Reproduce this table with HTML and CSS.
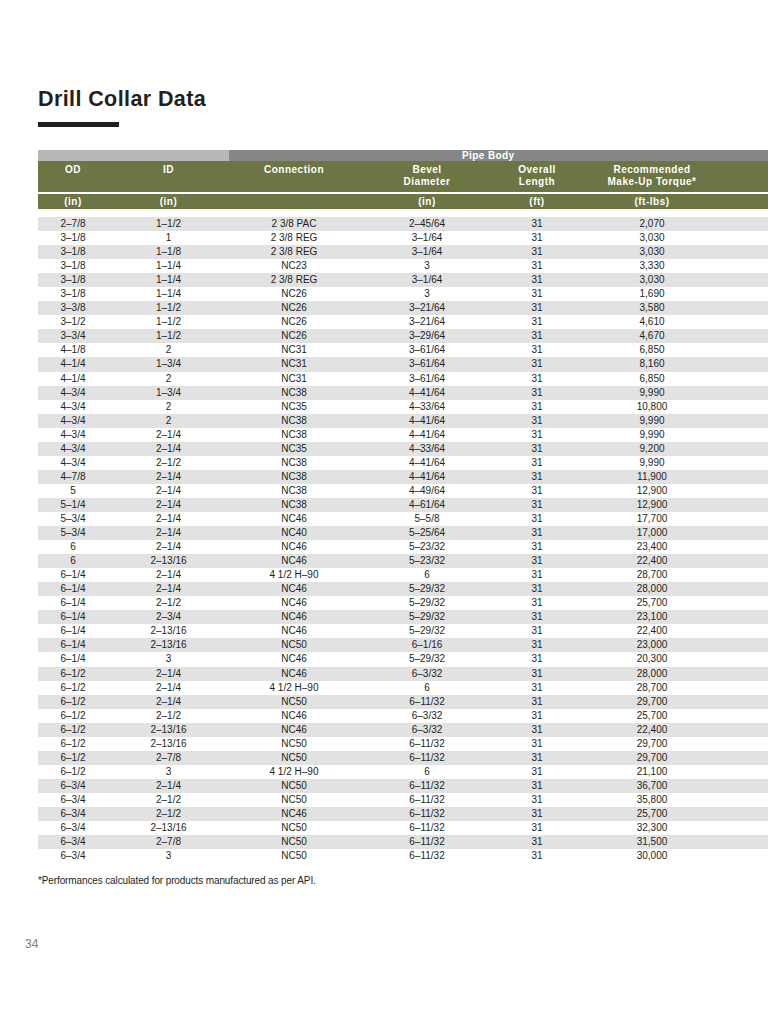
FILE: index.html
```html
<!DOCTYPE html>
<html lang="en">
<head>
<meta charset="utf-8">
<title>Drill Collar Data</title>
<link rel="stylesheet" href="styles.css">
</head>
<body>
<main class="page">
  <h1 class="title">Drill Collar Data</h1>
  <div class="title-rule"></div>

  <table class="data">
    <colgroup>
      <col class="c-od"><col class="c-id"><col class="c-conn"><col class="c-bevel"><col class="c-len"><col class="c-torque"><col class="c-rest">
    </colgroup>
    <thead>
      <tr class="band">
        <th colspan="2" class="band-light"></th>
        <th colspan="5" class="band-dark"><span class="band-label">Pipe Body</span></th>
      </tr>
      <tr class="head">
        <th>OD</th><th>ID</th><th>Connection</th><th>Bevel<br>Diameter</th><th>Overall<br>Length</th><th>Recommended<br>Make-Up Torque*</th><th></th>
      </tr>
      <tr class="units">
        <th>(in)</th><th>(in)</th><th></th><th>(in)</th><th>(ft)</th><th>(ft-lbs)</th><th></th>
      </tr>
      <tr class="gap"><td colspan="7"></td></tr>
    </thead>
    <tbody>
      <tr><td>2–7/8</td><td>1–1/2</td><td>2 3/8 PAC</td><td>2–45/64</td><td>31</td><td>2,070</td><td></td></tr>
      <tr><td>3–1/8</td><td>1</td><td>2 3/8 REG</td><td>3–1/64</td><td>31</td><td>3,030</td><td></td></tr>
      <tr><td>3–1/8</td><td>1–1/8</td><td>2 3/8 REG</td><td>3–1/64</td><td>31</td><td>3,030</td><td></td></tr>
      <tr><td>3–1/8</td><td>1–1/4</td><td>NC23</td><td>3</td><td>31</td><td>3,330</td><td></td></tr>
      <tr><td>3–1/8</td><td>1–1/4</td><td>2 3/8 REG</td><td>3–1/64</td><td>31</td><td>3,030</td><td></td></tr>
      <tr><td>3–1/8</td><td>1–1/4</td><td>NC26</td><td>3</td><td>31</td><td>1,690</td><td></td></tr>
      <tr><td>3–3/8</td><td>1–1/2</td><td>NC26</td><td>3–21/64</td><td>31</td><td>3,580</td><td></td></tr>
      <tr><td>3–1/2</td><td>1–1/2</td><td>NC26</td><td>3–21/64</td><td>31</td><td>4,610</td><td></td></tr>
      <tr><td>3–3/4</td><td>1–1/2</td><td>NC26</td><td>3–29/64</td><td>31</td><td>4,670</td><td></td></tr>
      <tr><td>4–1/8</td><td>2</td><td>NC31</td><td>3–61/64</td><td>31</td><td>6,850</td><td></td></tr>
      <tr><td>4–1/4</td><td>1–3/4</td><td>NC31</td><td>3–61/64</td><td>31</td><td>8,160</td><td></td></tr>
      <tr><td>4–1/4</td><td>2</td><td>NC31</td><td>3–61/64</td><td>31</td><td>6,850</td><td></td></tr>
      <tr><td>4–3/4</td><td>1–3/4</td><td>NC38</td><td>4–41/64</td><td>31</td><td>9,990</td><td></td></tr>
      <tr><td>4–3/4</td><td>2</td><td>NC35</td><td>4–33/64</td><td>31</td><td>10,800</td><td></td></tr>
      <tr><td>4–3/4</td><td>2</td><td>NC38</td><td>4–41/64</td><td>31</td><td>9,990</td><td></td></tr>
      <tr><td>4–3/4</td><td>2–1/4</td><td>NC38</td><td>4–41/64</td><td>31</td><td>9,990</td><td></td></tr>
      <tr><td>4–3/4</td><td>2–1/4</td><td>NC35</td><td>4–33/64</td><td>31</td><td>9,200</td><td></td></tr>
      <tr><td>4–3/4</td><td>2–1/2</td><td>NC38</td><td>4–41/64</td><td>31</td><td>9,990</td><td></td></tr>
      <tr><td>4–7/8</td><td>2–1/4</td><td>NC38</td><td>4–41/64</td><td>31</td><td>11,900</td><td></td></tr>
      <tr><td>5</td><td>2–1/4</td><td>NC38</td><td>4–49/64</td><td>31</td><td>12,900</td><td></td></tr>
      <tr><td>5–1/4</td><td>2–1/4</td><td>NC38</td><td>4–61/64</td><td>31</td><td>12,900</td><td></td></tr>
      <tr><td>5–3/4</td><td>2–1/4</td><td>NC46</td><td>5–5/8</td><td>31</td><td>17,700</td><td></td></tr>
      <tr><td>5–3/4</td><td>2–1/4</td><td>NC40</td><td>5–25/64</td><td>31</td><td>17,000</td><td></td></tr>
      <tr><td>6</td><td>2–1/4</td><td>NC46</td><td>5–23/32</td><td>31</td><td>23,400</td><td></td></tr>
      <tr><td>6</td><td>2–13/16</td><td>NC46</td><td>5–23/32</td><td>31</td><td>22,400</td><td></td></tr>
      <tr><td>6–1/4</td><td>2–1/4</td><td>4 1/2 H–90</td><td>6</td><td>31</td><td>28,700</td><td></td></tr>
      <tr><td>6–1/4</td><td>2–1/4</td><td>NC46</td><td>5–29/32</td><td>31</td><td>28,000</td><td></td></tr>
      <tr><td>6–1/4</td><td>2–1/2</td><td>NC46</td><td>5–29/32</td><td>31</td><td>25,700</td><td></td></tr>
      <tr><td>6–1/4</td><td>2–3/4</td><td>NC46</td><td>5–29/32</td><td>31</td><td>23,100</td><td></td></tr>
      <tr><td>6–1/4</td><td>2–13/16</td><td>NC46</td><td>5–29/32</td><td>31</td><td>22,400</td><td></td></tr>
      <tr><td>6–1/4</td><td>2–13/16</td><td>NC50</td><td>6–1/16</td><td>31</td><td>23,000</td><td></td></tr>
      <tr><td>6–1/4</td><td>3</td><td>NC46</td><td>5–29/32</td><td>31</td><td>20,300</td><td></td></tr>
      <tr><td>6–1/2</td><td>2–1/4</td><td>NC46</td><td>6–3/32</td><td>31</td><td>28,000</td><td></td></tr>
      <tr><td>6–1/2</td><td>2–1/4</td><td>4 1/2 H–90</td><td>6</td><td>31</td><td>28,700</td><td></td></tr>
      <tr><td>6–1/2</td><td>2–1/4</td><td>NC50</td><td>6–11/32</td><td>31</td><td>29,700</td><td></td></tr>
      <tr><td>6–1/2</td><td>2–1/2</td><td>NC46</td><td>6–3/32</td><td>31</td><td>25,700</td><td></td></tr>
      <tr><td>6–1/2</td><td>2–13/16</td><td>NC46</td><td>6–3/32</td><td>31</td><td>22,400</td><td></td></tr>
      <tr><td>6–1/2</td><td>2–13/16</td><td>NC50</td><td>6–11/32</td><td>31</td><td>29,700</td><td></td></tr>
      <tr><td>6–1/2</td><td>2–7/8</td><td>NC50</td><td>6–11/32</td><td>31</td><td>29,700</td><td></td></tr>
      <tr><td>6–1/2</td><td>3</td><td>4 1/2 H–90</td><td>6</td><td>31</td><td>21,100</td><td></td></tr>
      <tr><td>6–3/4</td><td>2–1/4</td><td>NC50</td><td>6–11/32</td><td>31</td><td>36,700</td><td></td></tr>
      <tr><td>6–3/4</td><td>2–1/2</td><td>NC50</td><td>6–11/32</td><td>31</td><td>35,800</td><td></td></tr>
      <tr><td>6–3/4</td><td>2–1/2</td><td>NC46</td><td>6–11/32</td><td>31</td><td>25,700</td><td></td></tr>
      <tr><td>6–3/4</td><td>2–13/16</td><td>NC50</td><td>6–11/32</td><td>31</td><td>32,300</td><td></td></tr>
      <tr><td>6–3/4</td><td>2–7/8</td><td>NC50</td><td>6–11/32</td><td>31</td><td>31,500</td><td></td></tr>
      <tr><td>6–3/4</td><td>3</td><td>NC50</td><td>6–11/32</td><td>31</td><td>30,000</td><td></td></tr>
    </tbody>
  </table>

  <p class="footnote">*Performances calculated for products manufactured as per API.</p>
</main>
<footer class="page-footer">
  <span class="page-number">34</span>
</footer>
</body>
</html>
```

FILE: styles.css
```css
html, body {
  margin: 0;
  padding: 0;
  background: #ffffff;
}

body {
  font-family: "Liberation Sans", Arial, sans-serif;
  color: #231f20;
  width: 768px;
  overflow: hidden;
}

.page {
  padding: 87px 0 0 38px;
}

.title {
  margin: 0;
  font-size: 21.5px;
  line-height: 25px;
  font-weight: 700;
  letter-spacing: 0.4px;
  color: #231f20;
}

.title-rule {
  width: 81px;
  height: 5px;
  margin-top: 10px;
  background: #231f20;
}

.data {
  margin-top: 23px;
  width: 730px;
  table-layout: fixed;
  border-collapse: collapse;
  border-spacing: 0;
}

.c-od { width: 70px; }
.c-id { width: 121px; }
.c-conn { width: 130px; }
.c-bevel { width: 136px; }
.c-len { width: 84px; }
.c-torque { width: 146px; }

.data th,
.data td {
  padding: 0;
  text-align: center;
}

.band th {
  height: 11px;
  padding: 0;
  font-size: 10px;
  line-height: 11px;
  font-weight: 700;
  color: #ffffff;
  letter-spacing: 0.4px;
}

.band-light {
  background: #b7b8ba;
}

.band-dark {
  background: #878787;
  text-align: left !important;
}

.band-label {
  display: block;
  padding-left: 233px;
}

.head th {
  background: #6c7544;
  color: #ffffff;
  font-size: 10px;
  font-weight: 700;
  letter-spacing: 0.5px;
  line-height: 11.5px;
  height: 31px;
  padding: 3px 0 5px;
  vertical-align: top;
  box-sizing: border-box;
}

.units th {
  background: #6c7544;
  color: #ffffff;
  font-size: 10px;
  font-weight: 700;
  letter-spacing: 0.5px;
  line-height: 15px;
  height: 15px;
  border-top: 2px solid #ffffff;
  vertical-align: middle;
}

.gap td {
  height: 8px;
  line-height: 8px;
  padding: 0;
}

.data tbody td {
  font-size: 10px;
  line-height: 14.04px;
  height: 14.04px;
  color: #231f20;
  white-space: nowrap;
}

.data tbody tr:nth-child(odd) td {
  background: #e2e2e3;
}

.footnote {
  margin: 11px 0 0;
  font-size: 10px;
  line-height: 14px;
  letter-spacing: -0.12px;
  color: #231f20;
}

.page-footer {
  padding: 46px 0 0 25px;
}

.page-number {
  font-size: 12px;
  line-height: 14px;
  color: #808080;
}
```
